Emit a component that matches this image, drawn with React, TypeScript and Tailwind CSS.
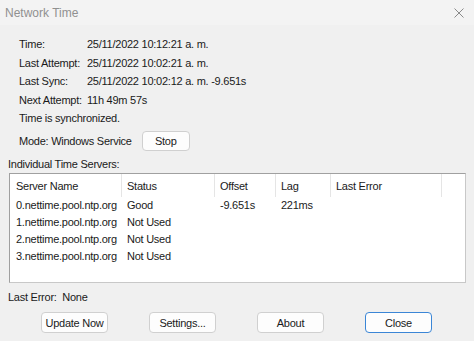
import React from 'react';

const info = [
  { label: 'Time:', value: '25/11/2022 10:12:21 a. m.' },
  { label: 'Last Attempt:', value: '25/11/2022 10:02:21 a. m.' },
  { label: 'Last Sync:', value: '25/11/2022 10:02:12 a. m. -9.651s' },
  { label: 'Next Attempt:', value: '11h 49m 57s' },
];

const servers = [
  { name: '0.nettime.pool.ntp.org', status: 'Good', offset: '-9.651s', lag: '221ms' },
  { name: '1.nettime.pool.ntp.org', status: 'Not Used', offset: '', lag: '' },
  { name: '2.nettime.pool.ntp.org', status: 'Not Used', offset: '', lag: '' },
  { name: '3.nettime.pool.ntp.org', status: 'Not Used', offset: '', lag: '' },
];

const Btn: React.FC<{ label: string; primary?: boolean; size?: string }> = ({ label, primary, size }) => (
  <button
    className={`${size || 'h-[21px] w-[67px]'} rounded-[4px] bg-[#fdfdfd] text-[11px] leading-[14px] text-[#1a1a1a] whitespace-nowrap ${
      primary ? 'border border-[#3b86d6]' : 'border border-[#d0d0d0]'
    }`}
  >
    {label}
  </button>
);

export default function App() {
  return (
    <div
      className="w-[474px] h-[341px] bg-[#f0f0f0] flex flex-col text-[11px] leading-[14px] tracking-[-0.25px] text-[#1a1a1a] overflow-hidden"
      style={{ fontFamily: '"Liberation Sans", Arial, sans-serif' }}
    >
      {/* title bar */}
      <div className="h-[25px] shrink-0 bg-[#f3f3f3] flex items-center justify-between pl-[5px] pr-[10px]">
        <span className="text-[12px] tracking-normal text-[#909090]">Network Time</span>
        <svg width="10" height="10" viewBox="0 0 10 10">
          <path d="M0.5 0.5 L9.5 9.5 M9.5 0.5 L0.5 9.5" stroke="#8a8a8a" strokeWidth="1" />
        </svg>
      </div>

      <div className="pl-[19px] pt-[10px] flex flex-col">
        {info.map(r => (
          <div key={r.label} className="h-[18.5px] flex items-center whitespace-nowrap">
            <span className="w-[68px] shrink-0">{r.label}</span>
            <span>{r.value}</span>
          </div>
        ))}
        <div className="h-[18.5px] flex items-center">Time is synchronized.</div>
        <div className="flex items-center gap-[10px] mt-[3.5px] h-[20px]">
          <span>Mode: Windows Service</span>
          <Btn label="Stop" size="h-[20px] w-[48px]" />
        </div>
      </div>

      <div className="pl-[8px] mt-[6px] h-[14px]">Individual Time Servers:</div>

      <div className="ml-[9px] w-[457px] mt-[2px] h-[110px] shrink-0 bg-white border border-[#a0a0a0] border-r-[#c8c8c8] border-b-[#c8c8c8] flex flex-col">
        <div className="h-[23px] flex items-stretch shrink-0">
          <div className="w-[112px] pl-[6px] flex items-center border-r border-[#e5e5e5]">Server Name</div>
          <div className="w-[93px] pl-[5px] flex items-center border-r border-[#e5e5e5]">Status</div>
          <div className="w-[61px] pl-[5px] flex items-center border-r border-[#e5e5e5]">Offset</div>
          <div className="w-[55px] pl-[5px] flex items-center border-r border-[#e5e5e5]">Lag</div>
          <div className="w-[111px] pl-[5px] flex items-center border-r border-[#e5e5e5]">Last Error</div>
        </div>
        {servers.map(s => (
          <div key={s.name} className="h-[16.8px] flex items-center whitespace-nowrap">
            <span className="w-[112px] pl-[6px] shrink-0">{s.name}</span>
            <span className="w-[93px] pl-[5px] shrink-0">{s.status}</span>
            <span className="w-[61px] pl-[5px] shrink-0">{s.offset}</span>
            <span className="w-[55px] pl-[5px] shrink-0">{s.lag}</span>
          </div>
        ))}
      </div>

      <div className="pl-[8px] mt-[7px] h-[14px]">Last Error:&nbsp; None</div>

      <div className="flex pl-[41px] gap-[41px] mt-[8px]">
        <Btn label="Update Now" />
        <Btn label="Settings..." />
        <Btn label="About" />
        <Btn label="Close" primary />
      </div>
    </div>
  );
}
